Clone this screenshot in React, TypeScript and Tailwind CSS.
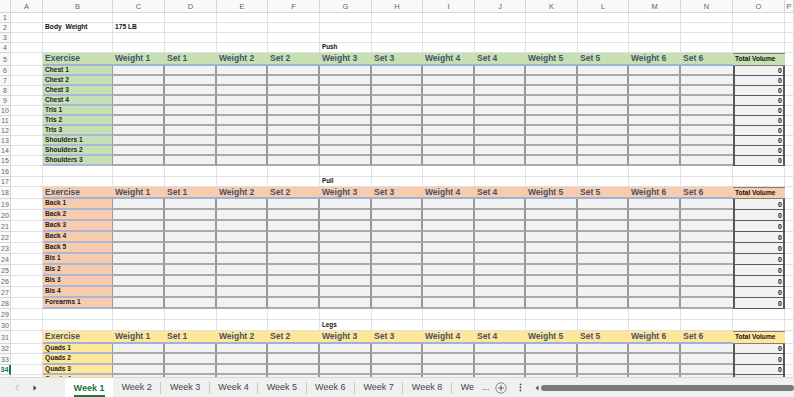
import React from "react";

const GRID =
  "grid grid-cols-[11px_32px_70px_52px_52px_51px_52px_52px_51px_52px_51px_52px_51px_52px_52px_52px_1fr]";

const LETTERS = "ABCDEFGHIJKLMNOP".split("");
const HEADS = [
  "Weight 1",
  "Set 1",
  "Weight 2",
  "Set 2",
  "Weight 3",
  "Set 3",
  "Weight 4",
  "Set 4",
  "Weight 5",
  "Set 5",
  "Weight 6",
  "Set 6",
];

type Section = {
  title: string;
  fill: string;
  first: number;
  blankH?: string;
  titleH: string;
  headH: string;
  rowH: string;
  rows: string[];
};

const SECTIONS: Section[] = [
  {
    title: "Push",
    fill: "bg-[#c6e0b4]",
    first: 4,
    titleH: "h-[10px]",
    headH: "h-[13px]",
    rowH: "h-[10px]",
    rows: [
      "Chest 1",
      "Chest 2",
      "Chest 3",
      "Chest 4",
      "Tris 1",
      "Tris 2",
      "Tris 3",
      "Shoulders 1",
      "Shoulders 2",
      "Shoulders 3",
    ],
  },
  {
    title: "Pull",
    fill: "bg-[#f8cbad]",
    first: 16,
    blankH: "h-[11px]",
    titleH: "h-[10px]",
    headH: "h-[12px]",
    rowH: "h-[11px]",
    rows: [
      "Back 1",
      "Back 2",
      "Back 3",
      "Back 4",
      "Back 5",
      "Bis 1",
      "Bis 2",
      "Bis 3",
      "Bis 4",
      "Forearms 1",
    ],
  },
  {
    title: "Legs",
    fill: "bg-[#ffe699]",
    first: 29,
    blankH: "h-[11px]",
    titleH: "h-[11px]",
    headH: "h-[13px]",
    rowH: "h-[10.4px]",
    rows: ["Quads 1", "Quads 2", "Quads 3", "Quads 4"],
  },
];

function Gridline({ children }: { children?: React.ReactNode }) {
  return (
    <div className="flex items-center overflow-visible whitespace-nowrap border-r border-b border-[#e1e1e1] pl-[2px]">
      {children}
    </div>
  );
}

function Row({
  n,
  h,
  children,
}: {
  n: number;
  h: string;
  children: React.ReactNode;
}) {
  const active = n === 34;
  return (
    <div className={`${GRID} ${h} grid-rows-[100%]`}>
      <div
        className={
          active
            ? "flex items-center justify-center border-r-2 border-b border-[#d6d6d6] border-r-[#217346] bg-[#f9f9f9] text-[7px] font-bold text-[#217346]"
            : "flex items-center justify-center border-r border-b border-[#d6d6d6] bg-[#f9f9f9] text-[7px] text-[#666]"
        }
      >
        {n}
      </div>
      {children}
    </div>
  );
}

function BlankRow({ n, h }: { n: number; h: string }) {
  return (
    <Row n={n} h={h}>
      {LETTERS.map((l) => (
        <Gridline key={l} />
      ))}
    </Row>
  );
}

function SectionBlock({ s }: { s: Section }) {
  let n = s.first;
  return (
    <>
      {s.blankH && <BlankRow n={n++} h={s.blankH} />}
      <Row n={n++} h={s.titleH}>
        {LETTERS.map((l) => (
          <Gridline key={l}>
            {l === "G" && (
              <span className="text-[6.3px] font-bold text-[#111]">
                {s.title}
              </span>
            )}
          </Gridline>
        ))}
      </Row>
      <Row n={n++} h={s.headH}>
        <Gridline />
        <div
          className={`flex items-center border-b-2 border-[#9fb3d8] pl-[2px] text-[8.5px] font-bold text-[#44546a] ${s.fill}`}
        >
          Exercise
        </div>
        {HEADS.map((t) => (
          <div
            key={t}
            className={`flex items-center whitespace-nowrap border-b-2 border-[#9fb3d8] pl-[2px] text-[8.5px] font-bold text-[#44546a] ${s.fill}`}
          >
            {t}
          </div>
        ))}
        <div
          className={`flex items-center whitespace-nowrap border-t border-b border-[#7f7f7f] pl-[2px] text-[6.6px] font-bold text-[#111] ${s.fill}`}
        >
          Total Volume
        </div>
        <Gridline />
      </Row>
      {s.rows.map((ex) => (
        <Row key={ex} n={n++} h={s.rowH}>
          <Gridline />
          <div
            className={`flex items-center whitespace-nowrap border-r border-b-2 border-r-[#9a9a9a] border-b-[#a9b7d6] pl-[2px] text-[6.6px] font-bold text-[#1d1d1d] ${s.fill}`}
          >
            {ex}
          </div>
          {HEADS.map((t, i) => (
            <div
              key={t}
              className={
                i === 11
                  ? "border-b-2 border-b-[#aaa] bg-[#f2f2f2]"
                  : "border-r-2 border-b-2 border-r-[#999] border-b-[#aaa] bg-[#f2f2f2]"
              }
            />
          ))}
          <div className="flex items-center justify-end border-x-2 border-b border-[#595959] bg-[#f2f2f2] pr-[1px] text-[7px] font-bold text-[#111]">
            0
          </div>
          <Gridline />
        </Row>
      ))}
    </>
  );
}

function Tab({ label }: { label: string }) {
  return (
    <>
      <div className="flex w-[47.4px] flex-none items-center justify-center text-[#444]">
        {label}
      </div>
      <div className="h-[12px] w-px flex-none bg-[#c8c8c8]" />
    </>
  );
}

export default function App() {
  return (
    <div className="flex h-[397px] w-[794px] flex-col overflow-hidden bg-white font-['Liberation_Sans',Arial,sans-serif] leading-none">
      <div className="h-[377px] flex-none overflow-hidden">
        {/* column letters */}
        <div className={`${GRID} h-[13px] grid-rows-[100%]`}>
          <div className="border-r border-b border-[#d6d6d6] bg-[#f9f9f9]" />
          {LETTERS.map((l) => (
            <div
              key={l}
              className="flex items-center justify-center border-r border-b border-[#d6d6d6] bg-[#f9f9f9] pt-[2px] text-[7.5px] text-[#666]"
            >
              {l}
            </div>
          ))}
        </div>

        <BlankRow n={1} h="h-[10px]" />
        <Row n={2} h="h-[10px]">
          <Gridline />
          <Gridline>
            <span className="text-[6.7px] font-bold text-[#111]">
              Body&nbsp;&nbsp;Weight
            </span>
          </Gridline>
          <Gridline>
            <span className="text-[6.7px] font-bold text-[#111]">175 LB</span>
          </Gridline>
          {LETTERS.slice(3).map((l) => (
            <Gridline key={l} />
          ))}
        </Row>
        <BlankRow n={3} h="h-[10px]" />

        {SECTIONS.map((s) => (
          <SectionBlock key={s.title} s={s} />
        ))}
      </div>

      {/* sheet tabs */}
      <div className="flex h-[20px] flex-none items-center border-t border-[#d9d9d9] bg-[#f0f0f0] text-[9px]">
        <div className="flex w-[65px] flex-none items-center pl-[15px]">
          <svg width="4" height="7" viewBox="0 0 4 7">
            <path d="M3.5 0.5 L0.8 3.5 L3.5 6.5" fill="none" stroke="#b4b4b4" strokeWidth="1" />
          </svg>
          <svg width="4" height="6" viewBox="0 0 4 6" className="ml-[14px]">
            <path d="M0.5 0.5 L3.5 3 L0.5 5.5 Z" fill="#333" />
          </svg>
        </div>
        <div className="flex h-full w-[48px] flex-none flex-col items-center bg-white pt-[5px]">
          <span className="leading-[10px] font-bold text-[#217346]">Week 1</span>
          <div className="mt-[2px] h-[2px] w-[31px] bg-[#217346]" />
        </div>
        {["Week 2", "Week 3", "Week 4", "Week 5", "Week 6", "Week 7", "Week 8"].map(
          (t) => (
            <Tab key={t} label={t} />
          )
        )}
        <div className="flex w-[40px] flex-none items-center pl-[9px] text-[#444]">
          <span>We</span>
          <span className="ml-[8px]">...</span>
        </div>
        <svg width="12" height="12" viewBox="0 0 12 12" className="ml-[3px] flex-none">
          <circle cx="6" cy="6" r="5.2" fill="none" stroke="#8a8a8a" strokeWidth="1" />
          <path d="M6 3.3 V8.7 M3.3 6 H8.7" stroke="#555" strokeWidth="1" />
        </svg>
        <svg width="3" height="9" viewBox="0 0 3 9" className="ml-[12px] flex-none">
          <circle cx="1.5" cy="1.5" r="0.9" fill="#555" />
          <circle cx="1.5" cy="4.5" r="0.9" fill="#555" />
          <circle cx="1.5" cy="7.5" r="0.9" fill="#555" />
        </svg>
        <svg width="4" height="6" viewBox="0 0 4 6" className="ml-[13px] flex-none">
          <path d="M3.5 0.5 L0.5 3 L3.5 5.5 Z" fill="#555" />
        </svg>
        <div className="ml-[2px] h-[6px] flex-1 rounded-full bg-[#7b7b7b]" />
      </div>
    </div>
  );
}
